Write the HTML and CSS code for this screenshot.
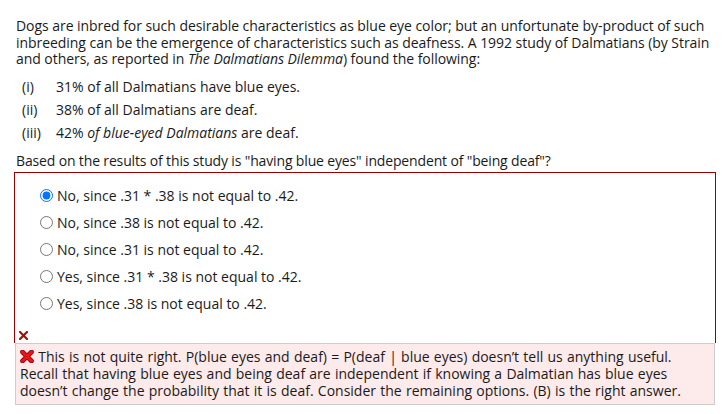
FILE: index.html
```html
<!DOCTYPE html>
<html>
<head>
<meta charset="utf-8">
<link rel="stylesheet" href="styles.css">
</head>
<body>
<div class="page">
  <p class="intro">Dogs are inbred for such desirable characteristics as blue eye color; but an unfortunate by-product of such inbreeding can be the emergence of characteristics such as deafness. A 1992 study of Dalmatians (by Strain and others, as reported in <em>The Dalmatians Dilemma</em>) found the following:</p>
  <ol class="facts">
    <li><span class="num">(i)</span><span>31% of all Dalmatians have blue eyes.</span></li>
    <li><span class="num">(ii)</span><span>38% of all Dalmatians are deaf.</span></li>
    <li><span class="num">(iii)</span><span>42% <em>of blue-eyed Dalmatians</em> are deaf.</span></li>
  </ol>
  <p class="question">Based on the results of this study is "having blue eyes" independent of "being deaf"?</p>
  <div class="answer">
    <div class="choices">
      <label class="choice"><input type="radio" name="q" checked><span>No, since .31 * .38 is not equal to .42.</span></label>
      <label class="choice"><input type="radio" name="q"><span>No, since .38 is not equal to .42.</span></label>
      <label class="choice"><input type="radio" name="q"><span>No, since .31 is not equal to .42.</span></label>
      <label class="choice"><input type="radio" name="q"><span>Yes, since .31 * .38 is not equal to .42.</span></label>
      <label class="choice"><input type="radio" name="q"><span>Yes, since .38 is not equal to .42.</span></label>
    </div>
    <div class="mark"><svg width="9" height="9" viewBox="0 0 9 9"><path d="M1 1L8 8M8 1L1 8" stroke="#a01010" stroke-width="2.2" stroke-linecap="square"/></svg></div>
  </div>
  <div class="feedback"><svg class="fx" width="14" height="13" viewBox="0 0 14 13"><path d="M2.5 2L11.5 11M11.5 2L2.5 11" stroke="#7a0000" stroke-width="4.6" stroke-linecap="round"/><path d="M2.5 2L11.5 11M11.5 2L2.5 11" stroke="#e8141c" stroke-width="3.2" stroke-linecap="round"/></svg> This is not quite right. P(blue eyes and deaf) = P(deaf | blue eyes) doesn’t tell us anything useful. Recall that having blue eyes and being deaf are independent if knowing a Dalmatian has blue eyes doesn’t change the probability that it is deaf. Consider the remaining options. (B) is the right answer.</div>
</div>
</body>
</html>
```
FILE: styles.css
```css
html, body {
  margin: 0;
  padding: 0;
  background: #fff;
}
body {
  font-family: "Open Sans", "Noto Sans", sans-serif;
  font-size: 14px;
  color: #1a1a1a;
}
.page {
  width: 702px;
  padding: 18px 6px 0 14px;
}
.intro {
  margin: 0 0 0 2px;
  line-height: 16.5px;
  letter-spacing: -0.05px;
}
.facts {
  list-style: none;
  margin: 7px 0 0 0;
  padding: 0 0 0 8px;
}
.facts li {
  display: flex;
  height: 23px;
  align-items: center;
}
.facts .num {
  width: 34px;
}
.question {
  margin: 8px 0 0 2px;
  line-height: 18px;
  letter-spacing: -0.15px;
}
.answer {
  margin-top: 2px;
  border: 1px solid #990000;
  border-bottom: none;
  padding: 9px 0 0 0;
}
.choices {
  display: flex;
  flex-direction: column;
  padding-left: 20px;
}
.choice {
  display: flex;
  align-items: center;
  height: 27px;
}
.choice input {
  margin: 0 4px 0 5px;
  width: 13px;
  height: 13px;
}
.mark {
  height: 26px;
  padding: 14px 0 0 4px;
  box-sizing: border-box;
}
.mark svg {
  display: block;
}
.feedback {
  margin: 0 1px;
  background: #fdeaea;
  border: 1px solid #cccccc;
  padding: 4px 6px 5px 4px;
  line-height: 17px;
  word-spacing: 0.6px;
}
.fx {
  vertical-align: -1px;
}
```
